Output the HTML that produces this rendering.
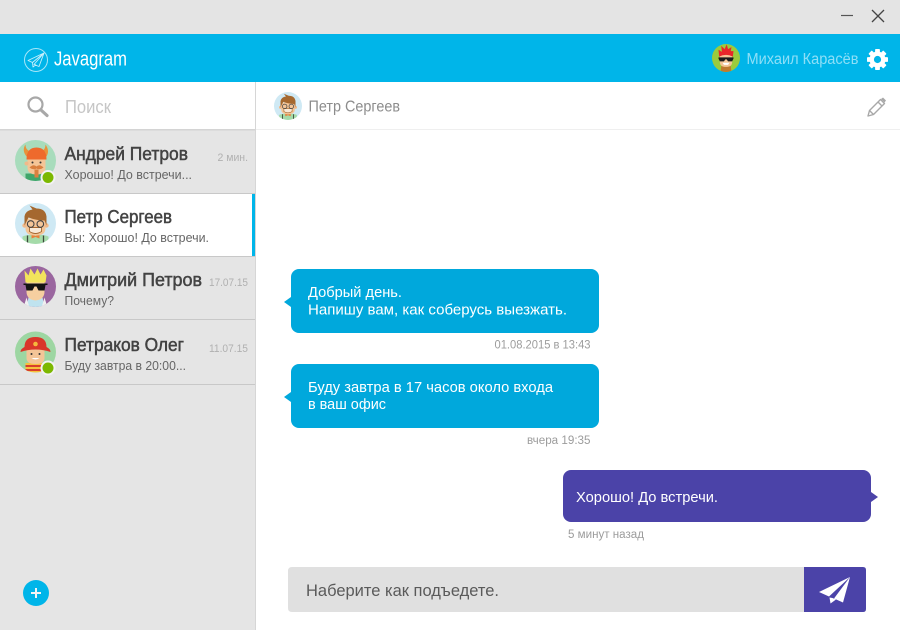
<!DOCTYPE html>
<html><head><meta charset="utf-8"><style>
html,body{margin:0;padding:0;background:#fff;overflow:hidden}
svg{display:block}
text{font-family:"Liberation Sans","DejaVu Sans",sans-serif}
.n{font-size:18px;fill:#434343;stroke:#434343;stroke-width:.5}
.p{font-size:13px;fill:#666}
.t{font-size:11px;fill:#b0b0b0}
.m{font-size:15px;fill:#fff}
.s{font-size:11.5px;fill:#9c9c9c}
</style></head><body>
<svg width="900" height="630" viewBox="0 0 900 630" xmlns="http://www.w3.org/2000/svg">
<defs>
<clipPath id="c"><circle cx="0" cy="0" r="20.5"/></clipPath>
<symbol id="andrey" overflow="visible" viewBox="-21 -21 42 42" width="42" height="42"><g clip-path="url(#c)">
<rect x="-21" y="-21" width="42" height="42" fill="#a8dcbc"/>
<path d="M-9 -4C-13 -9-12-13-10-16C-10-12-8-10-5-9ZM11 -4C14-9 12-13 10-16C10-12 8-10 6-9Z" fill="#e8923a"/>
<path d="M-10 21V13H12V21Z" fill="#3fa66b"/>
<path d="M-8 -3H10V7Q10 14 1 14Q-8 14-8 7Z" fill="#f4c597"/>
<circle cx="-9" cy="3" r="2" fill="#f0b98a"/>
<path d="M-9 -1Q-9 -13 1 -13Q11 -13 11 -1Z" fill="#ee6a2c"/>
<path d="M-6 7Q-2 3 1 6Q4 3 8 7Q4 10 1 8Q-2 10-6 7ZM-1 9H3V17H-1Z" fill="#d9803f"/>
<circle cx="-3" cy="2" r="1" fill="#333"/><circle cx="5" cy="2" r="1" fill="#333"/>
</g></symbol>
<symbol id="petr" overflow="visible" viewBox="-21 -21 42 42" width="42" height="42"><g clip-path="url(#c)">
<rect x="-21" y="-21" width="42" height="42" fill="#cfe9f4"/>
<path d="M-13 21V13Q-8 11 0 11Q8 11 13 13V21Z" fill="#a5dba9"/>
<path d="M-8 12V21M8 12V21" stroke="#3d4a3d" stroke-width="1.3"/>
<path d="M-4 11L0 12.500L4 11V15L0 13.500L-4 15Z" fill="#e8803a"/>
<path d="M-10 -5H10V5Q10 12 0 12Q-10 12-10 5Z" fill="#f4c597"/>
<circle cx="-11" cy="2" r="2.200" fill="#f0b98a"/><circle cx="11" cy="2" r="2.200" fill="#f0b98a"/>
<path d="M-11 2V-7Q-10-13-3-14L-6-18L1-15Q10-15 11-7V2L9-3Q1-3-7-6L-9-2Z" fill="#a5682f"/>
<path d="M-6 4H6V8Q0 12-6 8Z" fill="#f8ead8" stroke="#a5682f" stroke-width=".9"/>
<circle cx="-4.800" cy=".5" r="3.300" fill="none" stroke="#444" stroke-width="1.100"/><circle cx="4.800" cy=".5" r="3.300" fill="none" stroke="#444" stroke-width="1.100"/>
</g></symbol>
<symbol id="dmitry" overflow="visible" viewBox="-21 -21 42 42" width="42" height="42"><g clip-path="url(#c)">
<rect x="-21" y="-21" width="42" height="42" fill="#9a669f"/>
<path d="M-7 11H7L9 21H-9Z" fill="#bfe3ef"/>
<path d="M-9 11L-6 21H-12ZM9 11L6 21H12Z" fill="#f0f0f0"/>
<path d="M-9 -8H9V5Q9 13 0 14Q-9 13-9 5Z" fill="#f6cfa0"/>
<path d="M-10 -4L-11-16L-7-11L-5-18L-1-12L2-18L5-12L8-17L11-11L10-4Z" fill="#f2e45c"/>
<path d="M-12 -3H12V-1.500H10L9 4H3L1 0H-1L-3 4H-9L-10-1.500H-12Z" fill="#141414"/>
</g></symbol>
<symbol id="oleg" overflow="visible" viewBox="-21 -21 42 42" width="42" height="42"><g clip-path="url(#c)">
<rect x="-21" y="-21" width="42" height="42" fill="#9dd6a2"/>
<path d="M-10 11H10V21H-10Z" fill="#f7c13c"/><path d="M-10 13H10V15H-10ZM-10 17H10V19H-10Z" fill="#d93f2c"/>
<path d="M-9 -4H9V6Q9 12 0 12Q-9 12-9 6Z" fill="#f4c597"/>
<path d="M-15 0Q-15-3-11-5Q-11-15 0-15Q11-15 11-5Q15-3 15 0Q0-5-15 0Z" fill="#d9362a"/>
<circle cx="0" cy="-8" r="2.300" fill="#f6b73c"/>
<circle cx="-4" cy="2" r="1" fill="#333"/><circle cx="4" cy="2" r="1" fill="#333"/>
<path d="M-4 6Q0 9 4 6Z" fill="#fff"/>
</g></symbol>
<symbol id="mikhail" overflow="visible" viewBox="-21 -21 42 42" width="42" height="42"><g clip-path="url(#c)">
<rect x="-21" y="-21" width="42" height="42" fill="#9acb3d"/>
<path d="M-7 12H7L8 21H-8Z" fill="#c07a2e"/>
<path d="M-9 -6H9V6Q9 13 0 13Q-9 13-9 6Z" fill="#f4c597"/>
<path d="M-10 -2L-11-12L-6-9L-7-18L-2-13L1-20L3-13L8-16L7-10L11-10L10-2Q0-7-10-2Z" fill="#e8262a"/>
<path d="M-11 -1H11V1L9 5H3L1 2H-1L-3 5H-9L-11 1Z" fill="#1c1c1c"/>
<path d="M-5 7H5L3 10H-3Z" fill="#fff"/>
</g></symbol>
</defs>

<rect width="900" height="34" fill="#e4e4e4"/>
<rect y="34" width="900" height="48" fill="#00b5e9"/>
<path d="M841 15.500H853" stroke="#555" stroke-width="1.200"/>
<path d="M872 10L884 22M884 10L872 22" stroke="#444" stroke-width="1.300"/>

<circle cx="36" cy="60" r="11.500" fill="none" stroke="#a8e6f8" stroke-width="1"/>
<path d="M44 53L28 60.500L32.500 62.500ZM44 53L34 64.500L39 66.500ZM44 53L32.500 62.500L33 67L36 64.500" fill="none" stroke="#c8effb" stroke-width=".9" stroke-linejoin="round"/>
<text x="54" y="65.500" font-size="20.500" fill="#fff" textLength="73" lengthAdjust="spacingAndGlyphs">Javagram</text>

<use href="#mikhail" transform="translate(726 58) scale(.683) translate(-21 -21)"/>
<text x="746.500" y="64" font-size="15.500" fill="#8edff7" textLength="112" lengthAdjust="spacingAndGlyphs">Михаил Карасёв</text>
<g transform="translate(877.500 59.500)">
<circle r="5.800" fill="none" stroke="#fff" stroke-width="4.400"/>
<g fill="#fff"><rect x="-2.400" y="-10.500" width="4.800" height="4.500" rx=".8"/><rect x="-2.400" y="-10.500" width="4.800" height="4.500" rx=".8" transform="rotate(45)"/><rect x="-2.400" y="-10.500" width="4.800" height="4.500" rx=".8" transform="rotate(90)"/><rect x="-2.400" y="-10.500" width="4.800" height="4.500" rx=".8" transform="rotate(135)"/><rect x="-2.400" y="-10.500" width="4.800" height="4.500" rx=".8" transform="rotate(180)"/><rect x="-2.400" y="-10.500" width="4.800" height="4.500" rx=".8" transform="rotate(225)"/><rect x="-2.400" y="-10.500" width="4.800" height="4.500" rx=".8" transform="rotate(270)"/><rect x="-2.400" y="-10.500" width="4.800" height="4.500" rx=".8" transform="rotate(315)"/></g>
</g>

<!-- sidebar -->
<rect y="82" width="255" height="548" fill="#e5e5e5"/>
<rect y="82" width="255" height="47" fill="#fff"/>
<rect x="255" y="82" width="1" height="548" fill="#d6d6d6"/>
<rect y="129" width="255" height="1.500" fill="#d4d4d4"/>
<rect x="256" y="129" width="644" height="1" fill="#efefef"/>
<circle cx="35.500" cy="104.500" r="7" fill="none" stroke="#a8a8a8" stroke-width="2.200"/>
<path d="M41 110L47 115.500" stroke="#a8a8a8" stroke-width="3.200" stroke-linecap="round"/>
<text x="65" y="113" font-size="18" fill="#c6c6c6" textLength="46" lengthAdjust="spacingAndGlyphs">Поиск</text>

<rect y="194" width="255" height="62" fill="#fff"/>
<rect x="252" y="194" width="3" height="62" fill="#00b5e9"/>
<rect y="193" width="255" height="1" fill="#c8c8c8"/>
<rect y="256" width="255" height="1" fill="#c8c8c8"/>
<rect y="319" width="255" height="1" fill="#c8c8c8"/>
<rect y="384" width="255" height="1" fill="#c8c8c8"/>

<use href="#andrey" x="14.500" y="139.500"/>
<circle cx="48" cy="177.500" r="7.500" fill="#f2f2f2"/><circle cx="48" cy="177.500" r="5.500" fill="#7cb800"/>
<text class="n" x="64.500" y="160" textLength="123.500" lengthAdjust="spacingAndGlyphs">Андрей Петров</text>
<text class="p" x="64.500" y="179" textLength="127.500" lengthAdjust="spacingAndGlyphs">Хорошо! До встречи...</text>
<text class="t" x="217.500" y="161" textLength="30.500" lengthAdjust="spacingAndGlyphs">2 мин.</text>

<use href="#petr" x="14.500" y="202.500"/>
<text class="n" x="64.500" y="223" textLength="107.500" lengthAdjust="spacingAndGlyphs">Петр Сергеев</text>
<text class="p" x="64.500" y="242" textLength="144.500" lengthAdjust="spacingAndGlyphs">Вы: Хорошо! До встречи.</text>

<use href="#dmitry" x="14.500" y="265.500"/>
<text class="n" x="64.500" y="286" textLength="137.500" lengthAdjust="spacingAndGlyphs">Дмитрий Петров</text>
<text class="p" x="64.500" y="305" textLength="49.500" lengthAdjust="spacingAndGlyphs">Почему?</text>
<text class="t" x="209" y="286" textLength="39" lengthAdjust="spacingAndGlyphs">17.07.15</text>

<use href="#oleg" x="14.500" y="331"/>
<circle cx="48" cy="368" r="7.500" fill="#f2f2f2"/><circle cx="48" cy="368" r="5.500" fill="#7cb800"/>
<text class="n" x="64.500" y="351" textLength="119.500" lengthAdjust="spacingAndGlyphs">Петраков Олег</text>
<text class="p" x="64.500" y="370" textLength="121.500" lengthAdjust="spacingAndGlyphs">Буду завтра в 20:00...</text>
<text class="t" x="209" y="352" textLength="39" lengthAdjust="spacingAndGlyphs">11.07.15</text>

<circle cx="36" cy="593" r="13" fill="#00b5e9"/>
<path d="M31 593H41M36 588V598" stroke="#f4f4f4" stroke-width="2"/>

<!-- chat header -->
<use href="#petr" transform="translate(288 106) scale(.683) translate(-21 -21)"/>
<text x="308.500" y="111.500" font-size="15.500" fill="#8c8c8c" textLength="91.500" lengthAdjust="spacingAndGlyphs">Петр Сергеев</text>
<path d="M868 116L869.500 110.500L880.500 99.500L884.500 103.500L873.500 114.500ZM878 102L882 106M869.500 110.500L873.500 114.500" fill="none" stroke="#a8a8a8" stroke-width="1.400" stroke-linejoin="round"/>
<path d="M881 99L883 97.500L886 100.500L884.500 102.500Z" fill="#a8a8a8"/>

<!-- messages -->
<rect x="291" y="269" width="308" height="64" rx="8" fill="#00a8dc"/>
<path d="M291 297L284 302L291 307Z" fill="#00a8dc"/>
<text class="m" x="308" y="297" textLength="94" lengthAdjust="spacingAndGlyphs">Добрый день.</text>
<text class="m" x="308" y="314.500" textLength="259" lengthAdjust="spacingAndGlyphs">Напишу вам, как соберусь выезжать.</text>
<text class="s" x="494.500" y="348.500" textLength="96" lengthAdjust="spacingAndGlyphs">01.08.2015 в 13:43</text>

<rect x="291" y="364" width="308" height="64" rx="8" fill="#00a8dc"/>
<path d="M291 392L284 397L291 402Z" fill="#00a8dc"/>
<text class="m" x="308" y="392" textLength="245" lengthAdjust="spacingAndGlyphs">Буду завтра в 17 часов около входа</text>
<text class="m" x="308" y="409" textLength="78" lengthAdjust="spacingAndGlyphs">в ваш офис</text>
<text class="s" x="527" y="444" textLength="63.500" lengthAdjust="spacingAndGlyphs">вчера 19:35</text>

<rect x="563" y="470" width="308" height="52" rx="8" fill="#4b43a8"/>
<path d="M871 492L878 497L871 502Z" fill="#4b43a8"/>
<text class="m" x="576" y="502" textLength="142" lengthAdjust="spacingAndGlyphs">Хорошо! До встречи.</text>
<text class="s" x="568" y="538" textLength="76" lengthAdjust="spacingAndGlyphs">5 минут назад</text>

<!-- input -->
<path d="M292 567H804V612H292Q288 612 288 608V571Q288 567 292 567Z" fill="#e0e0e0"/>
<path d="M804 567H863Q866 567 866 570V609Q866 612 863 612H804Z" fill="#4b43a8"/>
<text x="306" y="596" font-size="17" fill="#5a5a5a" textLength="193" lengthAdjust="spacingAndGlyphs">Наберите как подъедете.</text>
<path d="M850 577L819 592L829 596.500ZM850 577L834 598.500L843 602.500ZM829.500 597.500L830.500 603.500L836 599.500L832.500 598Z" fill="#fff"/>
</svg>
</body></html>
